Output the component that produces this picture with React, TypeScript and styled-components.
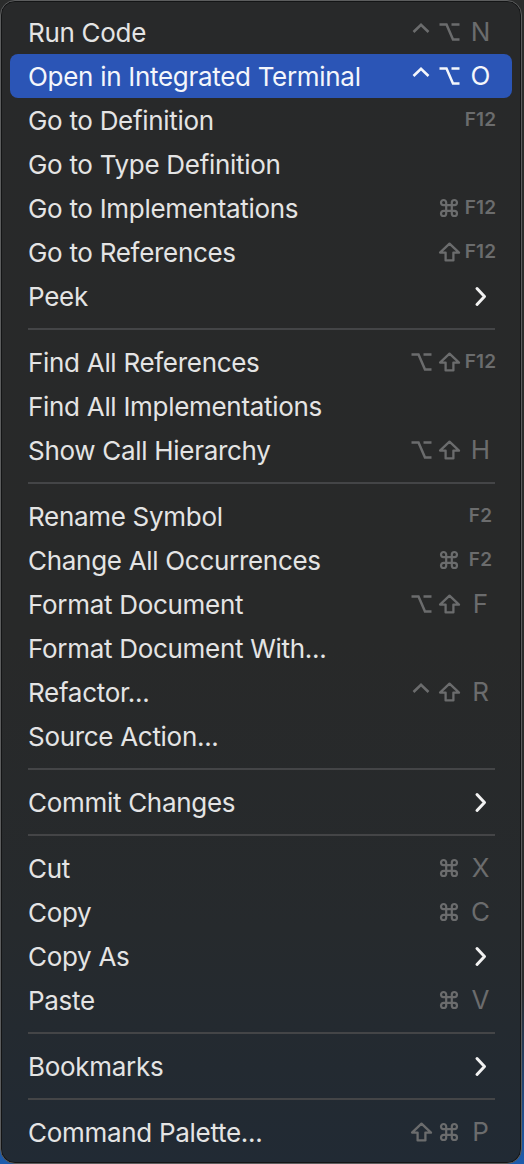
import React from "react";
import styled, { createGlobalStyle } from "styled-components";

const Global = createGlobalStyle`
  html, body { margin: 0; padding: 0; }
  body {
    width: 524px;
    height: 1164px;
    overflow: hidden;
    background: linear-gradient(180deg, #2b2c2c 0%, #2a2b2c 85%, #1d5cae 100%);
    font-family: Inter, "Noto Sans", sans-serif;
    -webkit-font-smoothing: antialiased;
  }
`;

const Menu = styled.div`
  box-sizing: border-box;
  width: 522px;
  height: 1164px;
  border: 1px solid #5c5d5e;
  border-radius: 15px;
  padding: 9px 0 9px;
  background: linear-gradient(180deg, #28292a 0%, #282929 55%, #262a2d 80%, #212a34 100%);
  display: flex;
  flex-direction: column;
  box-shadow: inset 0 0 0 1px #141516;
`;

const Row = styled.div<{ $active?: boolean }>`
  box-sizing: border-box;
  height: 44px;
  margin: 0 9px;
  padding: 0 14px 0 18px;
  border-radius: 8px;
  display: flex;
  align-items: center;
  background: ${(p) => (p.$active ? "#2b55b6" : "transparent")};
  color: ${(p) => (p.$active ? "#f4f6fb" : "#e4e4e4")};
`;

const Label = styled.span`
  flex: 1;
  font-size: 26px;
  letter-spacing: -0.3px;
  white-space: nowrap;
`;

const Shortcut = styled.div<{ $active?: boolean }>`
  display: flex;
  align-items: center;
  color: ${(p) => (p.$active ? "#f4f6fb" : "#6b6c6d")};
`;

const Mods = styled.div`
  display: flex;
  justify-content: flex-end;
`;

const ModSlot = styled.span`
  width: 28px;
  height: 44px;
  display: flex;
  align-items: center;
  justify-content: center;
`;

const Key = styled.span<{ $small?: boolean }>`
  width: 35px;
  text-align: center;
  font-size: ${(p) => (p.$small ? "19px" : "26px")};
  font-weight: ${(p) => (p.$small ? 600 : 400)};
  letter-spacing: ${(p) => (p.$small ? "0.2px" : "0")};
  line-height: 44px;
  white-space: nowrap;
`;

const ChevronSlot = styled.span`
  width: 35px;
  height: 44px;
  display: flex;
  align-items: center;
  justify-content: center;
  color: #f2f2f2;
`;

const Separator = styled.div`
  height: 22px;
  margin: 0 26px 0 27px;
  display: flex;
  align-items: center;
  &::after {
    content: "";
    flex: 1;
    height: 2px;
    background: #444547;
  }
`;

type Mod = "ctrl" | "opt" | "shift" | "cmd";

const ModIcon = ({ m }: { m: Mod }) => {
  const common = {
    fill: "none",
    stroke: "currentColor",
  } as const;
  if (m === "ctrl")
    return (
      <svg width="18" height="20" viewBox="0 0 18 20">
        <polyline points="1.5,10 9,2.8 16.5,10" {...common} strokeWidth={2.6} />
      </svg>
    );
  if (m === "opt")
    return (
      <svg width="21" height="20" viewBox="0 0 21 20">
        <path d="M0.5 2.5 H7.5 L14 17.5 H20.5 M12.5 2.5 H20.5" {...common} strokeWidth={2.5} />
      </svg>
    );
  if (m === "shift")
    return (
      <svg width="23" height="20" viewBox="0 0 23 20">
        <path
          d="M11.5 1.6 L21 10.6 H15.4 V18.4 H7.6 V10.6 H2 Z"
          {...common}
          strokeWidth={2.3}
          strokeLinejoin="round"
        />
      </svg>
    );
  return (
    <svg width="20" height="20" viewBox="0 0 20 20">
      <path
        d="M7.2 7.2 V4.6 A2.6 2.6 0 1 0 4.6 7.2 H15.4 A2.6 2.6 0 1 0 12.8 4.6 V15.4 A2.6 2.6 0 1 0 15.4 12.8 H4.6 A2.6 2.6 0 1 0 7.2 15.4 Z"
        {...common}
        strokeWidth={2.2}
      />
    </svg>
  );
};

const Chevron = () => (
  <svg width="13" height="21" viewBox="0 0 13 21">
    <polyline
      points="3,2.5 10.5,10.5 3,18.5"
      fill="none"
      stroke="currentColor"
      strokeWidth={3}
      strokeLinecap="round"
      strokeLinejoin="round"
    />
  </svg>
);

type Item =
  | "sep"
  | {
      label: string;
      mods?: Mod[];
      keyName?: string;
      small?: boolean;
      submenu?: boolean;
      active?: boolean;
    };

const items: Item[] = [
  { label: "Run Code", mods: ["ctrl", "opt"], keyName: "N" },
  { label: "Open in Integrated Terminal", mods: ["ctrl", "opt"], keyName: "O", active: true },
  { label: "Go to Definition", keyName: "F12", small: true },
  { label: "Go to Type Definition" },
  { label: "Go to Implementations", mods: ["cmd"], keyName: "F12", small: true },
  { label: "Go to References", mods: ["shift"], keyName: "F12", small: true },
  { label: "Peek", submenu: true },
  "sep",
  { label: "Find All References", mods: ["opt", "shift"], keyName: "F12", small: true },
  { label: "Find All Implementations" },
  { label: "Show Call Hierarchy", mods: ["opt", "shift"], keyName: "H" },
  "sep",
  { label: "Rename Symbol", keyName: "F2", small: true },
  { label: "Change All Occurrences", mods: ["cmd"], keyName: "F2", small: true },
  { label: "Format Document", mods: ["opt", "shift"], keyName: "F" },
  { label: "Format Document With..." },
  { label: "Refactor...", mods: ["ctrl", "shift"], keyName: "R" },
  { label: "Source Action..." },
  "sep",
  { label: "Commit Changes", submenu: true },
  "sep",
  { label: "Cut", mods: ["cmd"], keyName: "X" },
  { label: "Copy", mods: ["cmd"], keyName: "C" },
  { label: "Copy As", submenu: true },
  { label: "Paste", mods: ["cmd"], keyName: "V" },
  "sep",
  { label: "Bookmarks", submenu: true },
  "sep",
  { label: "Command Palette...", mods: ["shift", "cmd"], keyName: "P" },
];

export default function App() {
  return (
    <>
      <Global />
      <Menu>
        {items.map((it, i) => {
          if (it === "sep") return <Separator key={i} />;
          return (
            <Row key={i} $active={it.active}>
              <Label>{it.label}</Label>
              {it.submenu ? (
                <ChevronSlot>
                  <Chevron />
                </ChevronSlot>
              ) : it.keyName ? (
                <Shortcut $active={it.active}>
                  <Mods>
                    {(it.mods || []).map((m, j) => (
                      <ModSlot key={j}>
                        <ModIcon m={m} />
                      </ModSlot>
                    ))}
                  </Mods>
                  <Key $small={it.small}>{it.keyName}</Key>
                </Shortcut>
              ) : null}
            </Row>
          );
        })}
      </Menu>
    </>
  );
}
